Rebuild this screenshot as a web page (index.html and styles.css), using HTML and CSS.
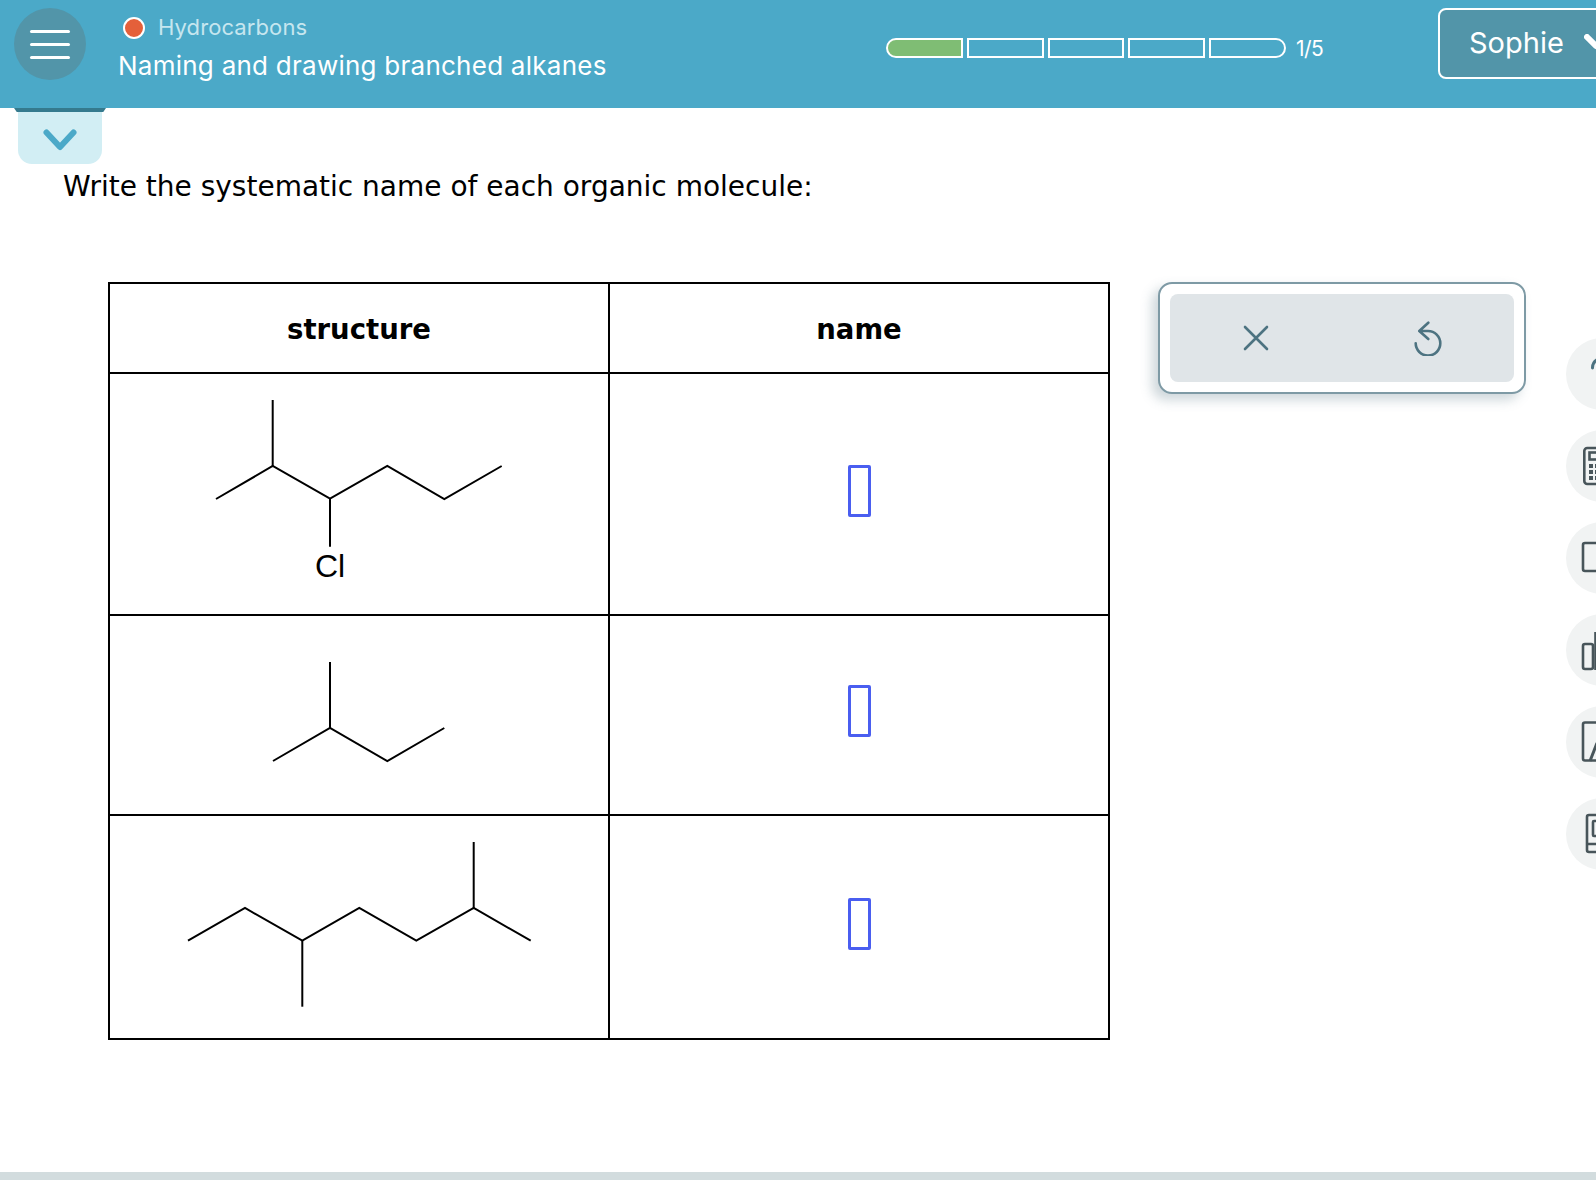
FILE: index.html
```html
<!DOCTYPE html>
<html lang="en">
<head>
<meta charset="utf-8">
<title>Naming and drawing branched alkanes</title>
<link rel="stylesheet" href="styles.css">
</head>
<body>
<header class="topbar">
  <button class="menu" aria-label="Menu"><span></span><span></span><span></span></button>
  <div class="titles">
    <div class="topic"><i class="dot"></i><span class="topic-name">Hydrocarbons</span></div>
    <div class="lesson">Naming and drawing branched alkanes</div>
  </div>
  <div class="progress">
    <i class="seg seg-first done"></i><i class="seg"></i><i class="seg"></i><i class="seg"></i><i class="seg seg-last"></i>
  </div>
  <div class="count">1/5</div>
  <div class="user"><span>Sophie</span>
    <svg class="user-chev" width="24" height="16" viewBox="0 0 24 16"><path d="M3 3l9 9 9-9" fill="none" stroke="#fff" stroke-width="6" stroke-linecap="round" stroke-linejoin="round"/></svg>
  </div>
</header>

<div class="tab">
  <svg width="34" height="22" viewBox="0 0 34 22"><path d="M3.500 3.500L17 18 30.500 3.500" fill="none" stroke="#4ba9c8" stroke-width="6" stroke-linecap="round" stroke-linejoin="round"/></svg>
</div>

<div class="workspace">
  <main class="main">
    <p class="question">Write the systematic name of each organic molecule:</p>
    <table class="grid">
      <thead>
        <tr><th>structure</th><th>name</th></tr>
      </thead>
      <tbody>
        <tr class="r1">
          <td>
            <svg class="mol" width="498" height="240" viewBox="110 374 498 240">
              <polyline points="216,499 272.7,466 330,498.7 387.3,466 444.3,499 501.7,466"/>
              <line x1="272.7" y1="400" x2="272.7" y2="466"/>
              <line x1="330" y1="498.7" x2="330" y2="546.7"/>
              <text x="330" y="577" text-anchor="middle">Cl</text>
            </svg>
          </td>
          <td><div class="blank"></div></td>
        </tr>
        <tr class="r2">
          <td>
            <svg class="mol" width="498" height="198" viewBox="110 616 498 198">
              <polyline points="273,761 330,728 387.3,761 444.3,728"/>
              <line x1="330" y1="662" x2="330" y2="728"/>
            </svg>
          </td>
          <td><div class="blank blank-high"></div></td>
        </tr>
        <tr class="r3">
          <td>
            <svg class="mol" width="498" height="222" viewBox="110 816 498 222">
              <polyline points="188,940.7 245,908 302.3,940.7 359.3,908 416.3,940.7 473.7,908 530.7,940.7"/>
              <line x1="473.7" y1="842" x2="473.7" y2="908"/>
              <line x1="302.3" y1="940.7" x2="302.3" y2="1006.7"/>
            </svg>
          </td>
          <td><div class="blank"></div></td>
        </tr>
      </tbody>
    </table>
  </main>

  <aside class="panel">
    <div class="panel-inner">
      <button class="panel-btn" aria-label="Clear">
        <svg width="28" height="28" viewBox="0 0 28 28"><path d="M3 3l22 22M25 3L3 25" fill="none" stroke="#4d7381" stroke-width="2.6" stroke-linecap="round"/></svg>
      </button>
      <button class="panel-btn" aria-label="Undo">
        <svg width="36" height="36" viewBox="0 0 36 36"><path d="M18.300 2.700L9.300 11l9 8M9.800 11H18A12.300 12.300 0 1 1 5.700 23.300" fill="none" stroke="#4d7381" stroke-width="2.6" stroke-linecap="round" stroke-linejoin="round"/></svg>
      </button>
    </div>
  </aside>

  <nav class="rail">
    <button class="tool tool-help" aria-label="Help">
      <svg width="72" height="72" viewBox="0 0 72 72"><path d="M26.500 30a9.500 9.500 0 1 1 15 7.500c-3 2-5.500 4-5.500 8" fill="none" stroke="#4d7381" stroke-width="3" stroke-linecap="round"/></svg>
    </button>
    <button class="tool" aria-label="Calculator">
      <svg width="72" height="72" viewBox="0 0 72 72"><g fill="none" stroke="#48555a" stroke-width="2.600"><rect x="18.300" y="18" width="36" height="36" rx="3"/><rect x="23.500" y="22.500" width="24" height="7"/></g><g fill="#48555a"><rect x="23" y="34" width="4" height="4"/><rect x="29" y="34" width="4" height="4"/><rect x="23" y="40" width="4" height="4"/><rect x="29" y="40" width="4" height="4"/><rect x="23" y="46" width="4" height="4"/><rect x="29" y="46" width="4" height="4"/></g></svg>
    </button>
    <button class="tool" aria-label="Notes">
      <svg width="72" height="72" viewBox="0 0 72 72"><rect x="17" y="21" width="38" height="28" rx="2" fill="none" stroke="#48555a" stroke-width="2.600"/></svg>
    </button>
    <button class="tool" aria-label="Data">
      <svg width="72" height="72" viewBox="0 0 72 72"><rect x="17" y="30" width="10" height="25" rx="2" fill="none" stroke="#48555a" stroke-width="2.600"/><path d="M29.500 18v38" fill="none" stroke="#48555a" stroke-width="2.600"/></svg>
    </button>
    <button class="tool" aria-label="Text">
      <svg width="72" height="72" viewBox="0 0 72 72"><rect x="17" y="16.500" width="38" height="38" rx="2" fill="none" stroke="#48555a" stroke-width="2.600"/><path d="M24 55l7-18" fill="none" stroke="#48555a" stroke-width="3"/></svg>
    </button>
    <button class="tool" aria-label="Textbook">
      <svg width="72" height="72" viewBox="0 0 72 72"><g fill="none" stroke="#48555a" stroke-width="2.600"><rect x="21" y="17" width="34" height="37" rx="2"/><path d="M21 46h34"/><rect x="27" y="23" width="20" height="15" rx="1"/></g></svg>
    </button>
  </nav>
</div>

<footer class="footbar"></footer>
</body>
</html>
```
FILE: styles.css
```css
* { box-sizing: border-box; }
html, body { margin: 0; height: 100%; }
body {
  width: 1596px;
  height: 1180px;
  overflow: hidden;
  background: #fff;
  display: flex;
  flex-direction: column;
  font-family: "DejaVu Sans", sans-serif;
  color: #000;
}
button { padding: 0; border: 0; background: none; font: inherit; }

.topbar {
  flex: 0 0 108px;
  display: flex;
  align-items: flex-start;
  background: #4ba9c8;
  padding-left: 14px;
  overflow: hidden;
}
.topbar > * { flex-shrink: 0; }
.menu {
  flex-basis: 72px;
  height: 72px;
  margin-top: 8px;
  border-radius: 50%;
  background: #5295a9;
  display: flex;
  flex-direction: column;
  align-items: center;
  justify-content: center;
  gap: 10px;
}
.menu span { width: 40px; height: 3px; border-radius: 2px; background: #fff; }
.titles {
  flex-basis: 767px;
  margin-left: 33px;
  font-family: Inter, sans-serif;
}
.topic {
  display: flex;
  align-items: center;
  height: 22px;
  margin-top: 17px;
  padding-left: 4px;
  font-size: 22px;
  letter-spacing: 0.1px;
  color: #c6e6ef;
}
.topic-name { padding-bottom: 2px; }
.dot {
  flex: 0 0 22px;
  height: 22px;
  margin-right: 13px;
  border-radius: 50%;
  background: #e4603a;
  border: 2px solid #fff;
}
.lesson {
  margin: 10px 0 0 -1px;
  font-size: 26px;
  letter-spacing: 0.25px;
  line-height: 34px;
  color: #fff;
}
.progress { display: flex; gap: 4px; flex-basis: 400px; margin-top: 38px; }
.seg { flex: 1; height: 20px; border: 2px solid #fff; }
.seg-first { border-radius: 10px 0 0 10px; }
.seg-last { border-radius: 0 10px 10px 0; }
.done { background: #7fbd74; }
.count {
  flex-basis: 29px;
  margin: 36px 0 0 10px;
  font-family: Inter, sans-serif;
  font-size: 21px;
  letter-spacing: -0.5px;
  white-space: nowrap;
  color: #fff;
}
.user {
  flex-basis: 200px;
  height: 71px;
  margin: 8px 0 0 113px;
  padding: 0 0 3px 29px;
  display: flex;
  align-items: center;
  gap: 20px;
  background: #5295a9;
  border: 2px solid #fff;
  border-radius: 8px 0 0 8px;
  font-family: Inter, sans-serif;
  font-size: 29px;
  color: #fff;
}
.user-chev { flex: none; }

.tab {
  width: 84px;
  height: 56px;
  margin-left: 18px;
  flex: none;
  display: flex;
  align-items: center;
  justify-content: center;
  padding-top: 8px;
  position: relative;
  background: #d2eef4;
  border-radius: 0 0 14px 14px;
}
.tab::before {
  content: "";
  position: absolute;
  top: 0;
  left: -4px;
  right: -4px;
  height: 4px;
  background: #357a8e;
  clip-path: polygon(0 0, 100% 0, 97% 100%, 3% 100%);
}

.workspace { flex: 1; display: flex; min-height: 0; overflow: hidden; }
.main { flex: 0 0 1110px; }
.question {
  margin: 0 0 75px 63px;
  padding-top: 3px;
  font-size: 28px;
  line-height: 40px;
}
.grid {
  width: 1002px;
  margin-left: 108px;
  table-layout: fixed;
  border-collapse: collapse;
  border: 2px solid #000;
}
.grid th, .grid td { border: 2px solid #000; padding: 0; text-align: center; }
.grid th { height: 90px; padding-top: 2px; font-size: 27.500px; font-weight: 700; }
.mol { display: block; margin: 0 auto; fill: none; stroke: #000; stroke-width: 2; stroke-linecap: butt; }
.mol text { font-family: "Liberation Sans", sans-serif; font-size: 32px; fill: #000; stroke: none; }
.blank {
  width: 23px;
  height: 52px;
  margin: 0 auto 7px;
  border: 3px solid #4a5ef0;
  border-radius: 2px;
}
.blank-high { margin-bottom: 9px; }

.panel {
  flex: none;
  width: 368px;
  height: 112px;
  margin: 118px 0 0 48px;
  padding: 10px;
  background: #fff;
  border: 2px solid #7e9aa5;
  border-radius: 14px;
  box-shadow: -6px 6px 12px rgba(80, 110, 125, 0.28);
}
.panel-inner {
  height: 100%;
  display: flex;
  background: #e0e5e8;
  border-radius: 8px;
}
.panel-btn { flex: 1; display: flex; align-items: center; justify-content: center; }

.rail {
  flex: none;
  width: 72px;
  margin: 174px 0 0 40px;
  display: flex;
  flex-direction: column;
  gap: 20px;
}
.tool { flex: 0 0 72px; height: 72px; border-radius: 50%; background: #f1f3f3; }
.tool svg { display: block; }

.footbar { flex: 0 0 8px; background: #d2dcde; }
```
